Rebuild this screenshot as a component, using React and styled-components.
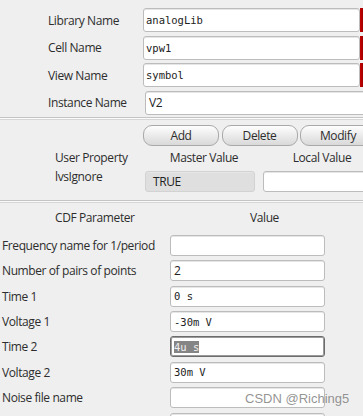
import React from 'react'
import styled, { createGlobalStyle } from 'styled-components'

const Global = createGlobalStyle`
  html, body { margin: 0; padding: 0; background: #efefef; }
`

const Frame = styled.div`
  position: relative;
  width: 363px;
  height: 416px;
  overflow: hidden;
  background: #efefef;
  font-family: "Open Sans", "Noto Sans", sans-serif;
  font-size: 12px;
  letter-spacing: -0.4px;
  color: #2d2d2d;
`

const Divider = styled.div`
  height: 1px;
  background: #fbfbfb;
  border-top: 1px solid #c4c4c4;
  border-bottom: 1px solid #d6d6d6;
`

const IdSection = styled.div`
  display: grid;
  grid-template-columns: 95px 1fr;
  row-gap: 3.6px;
  padding: 8px 0 2px 48px;
`

const Label = styled.div`
  display: flex;
  align-items: center;
  white-space: nowrap;
  line-height: 17px;
`

const FieldLine = styled.div`
  display: flex;
  height: 24px;
  padding-left: ${p => p.$indent || 0}px;
`

const Field = styled.div`
  box-sizing: border-box;
  flex: none;
  width: ${p => p.$w}px;
  height: 100%;
  display: flex;
  align-items: center;
  padding-left: ${p => p.$pad ?? 2}px;
  background: ${p => (p.$disabled ? '#dfdfdf' : '#fff')};
  border: 1px solid ${p => (p.$focus ? '#6c6c6c' : p.$disabled ? '#d2d2d2' : '#bcbcbc')};
  border-radius: 3px;
  box-shadow: ${p => (p.$focus ? 'inset 0 0 0 1px #9a9a9a' : 'inset 0 1px 0 #e6e6e6')};
  font-family: ${p => (p.$mono ? '"DejaVu Sans Mono", "Liberation Mono", monospace' : '"Open Sans", "Noto Sans", sans-serif')};
  font-size: ${p => (p.$mono ? 10.5 : 12)}px;
  letter-spacing: ${p => (p.$mono ? 0 : -0.4)}px;
  color: #222;
  white-space: pre;
`

const Flag = styled.div`
  flex: none;
  width: 3px;
  height: 100%;
  background: linear-gradient(to right, #c80000, #9e0000);
`

const Selected = styled.span`
  background: #858585;
  color: #f0f0f0;
`

const PropSection = styled.div`
  padding: 5px 0 7px 55px;
`

const ButtonBar = styled.div`
  display: flex;
  gap: 2.5px;
  padding-left: 88px;
`

const Button = styled.button`
  flex: none;
  width: 76px;
  height: 21px;
  padding: 0;
  border: 1px solid #a9a9a9;
  border-radius: 9px;
  background: linear-gradient(to bottom, #fefefe, #e9e9e9 55%, #d9d9d9);
  font-family: "Open Sans", "Noto Sans", sans-serif;
  font-size: 12px;
  letter-spacing: -0.4px;
  color: #2d2d2d;
`

const PropGrid = styled.div`
  display: grid;
  grid-template-columns: 90px 118px 118px;
  grid-template-rows: 17px 25px;
  row-gap: 2px;
  margin-top: 3px;
  align-items: start;
`

const ColHead = styled.div`
  line-height: 17px;
  text-align: ${p => (p.$center ? 'center' : 'left')};
  white-space: nowrap;
`

const Cell = styled.div`
  display: flex;
  height: 21px;
  margin-top: 3px;
`

const ParamSection = styled.div`
  padding-top: 6px;
`

const ParamHead = styled.div`
  display: grid;
  grid-template-columns: 170px 1fr;
  line-height: 17px;
  margin-bottom: 9px;
`

const HeadCell = styled.div`
  padding-left: ${p => p.$pad}px;
`

const ParamList = styled.div`
  display: grid;
  grid-template-columns: 168px 155px;
  grid-auto-rows: 21px;
  row-gap: 4.43px;
  padding-left: 2px;
`

const Watermark = styled.div`
  position: absolute;
  left: 245px;
  top: 391px;
  font-family: "Liberation Sans", Arial, sans-serif;
  font-size: 13px;
  letter-spacing: 0;
  line-height: 16px;
  color: rgba(120, 120, 120, 0.8);
`

const ids = [
  { label: 'Library Name', value: 'analogLib', mono: true, flag: true },
  { label: 'Cell Name', value: 'vpw1', mono: true, flag: true },
  { label: 'View Name', value: 'symbol', mono: true, flag: true },
  { label: 'Instance Name', value: 'V2', indent: 2, pad: 3 },
]

const params = [
  { label: 'Frequency name for 1/period', value: '' },
  { label: 'Number of pairs of points', value: '2' },
  { label: 'Time 1', value: '0 s', mono: true },
  { label: 'Voltage 1', value: '-30m V', mono: true },
  { label: 'Time 2', value: '4u s', mono: true, focus: true },
  { label: 'Voltage 2', value: '30m V', mono: true },
  { label: 'Noise file name', value: '' },
  { label: '', value: '' },
]

export default function App() {
  return (
    <Frame>
      <Global />
      <IdSection>
        {ids.map(r => (
          <React.Fragment key={r.label}>
            <Label>{r.label}</Label>
            <FieldLine $indent={r.indent}>
              <Field $w={r.flag ? 217 : 230} $mono={r.mono} $pad={r.pad}>
                {r.value}
              </Field>
              {r.flag && <Flag />}
            </FieldLine>
          </React.Fragment>
        ))}
      </IdSection>
      <Divider />
      <PropSection>
        <ButtonBar>
          <Button>Add</Button>
          <Button>Delete</Button>
          <Button>Modify</Button>
        </ButtonBar>
        <PropGrid>
          <ColHead>User Property</ColHead>
          <ColHead $center>Master Value</ColHead>
          <ColHead $center>Local Value</ColHead>
          <ColHead>lvsIgnore</ColHead>
          <Cell>
            <Field $w={110} $disabled $pad={7}>TRUE</Field>
          </Cell>
          <Cell>
            <Field $w={118} />
          </Cell>
        </PropGrid>
      </PropSection>
      <Divider />
      <ParamSection>
        <ParamHead>
          <HeadCell $pad={55}>CDF Parameter</HeadCell>
          <HeadCell $pad={80}>Value</HeadCell>
        </ParamHead>
        <ParamList>
          {params.map((p, i) => (
            <React.Fragment key={i}>
              <Label>{p.label}</Label>
              <Field $w={155} $mono={p.mono} $pad={3} $focus={p.focus}>
                {p.focus ? <Selected>{p.value}</Selected> : p.value}
              </Field>
            </React.Fragment>
          ))}
        </ParamList>
      </ParamSection>
      <Watermark>CSDN @Riching5</Watermark>
    </Frame>
  )
}
